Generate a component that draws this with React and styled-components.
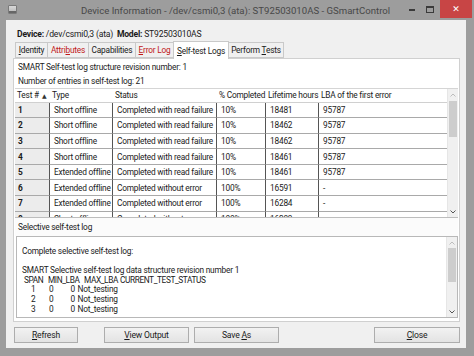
import React from 'react';
import styled, { createGlobalStyle } from 'styled-components';

const GlobalStyle = createGlobalStyle`
  html, body {
    margin: 0;
    padding: 0;
    background: #9d9d9d;
  }
  * { box-sizing: border-box; }
`;

const UI_FONT = `"Roboto", "Liberation Sans", sans-serif`;
const FS = '8.3px';
const LS = '-0.2px';

const Window = styled.div`
  width: 474px;
  height: 356px;
  background: #9d9d9d;
  display: flex;
  flex-direction: column;
  font-family: ${UI_FONT};
  letter-spacing: ${LS};
  color: #1a1a1a;
  overflow: hidden;
`;

const TitleBar = styled.div`
  height: 20px;
  flex: none;
  display: flex;
  align-items: center;
`;

const TitleIcon = styled.div`
  width: 9px;
  height: 9px;
  margin: 0 0 2px 8px;
  background: linear-gradient(#d8d8d8, #b8b8b8);
  border: 1px solid #7a7a7a;
  border-radius: 1px;
  &::after {
    content: '';
    display: block;
    margin-top: 5px;
    height: 2px;
    background: #666;
  }
`;

const TitleText = styled.div`
  flex: 1;
  text-align: center;
  font-size: 9.6px;
  letter-spacing: 0;
  color: #484848;
  padding-left: 50px;
  white-space: nowrap;
`;

const Controls = styled.div`
  display: flex;
  align-items: flex-start;
  height: 20px;
  margin-right: 2px;
`;

const CtlButton = styled.div`
  width: ${p => p.$w}px;
  height: 18px;
  display: flex;
  align-items: center;
  justify-content: center;
  background: ${p => (p.$close ? '#c84545' : 'transparent')};
  color: ${p => (p.$close ? '#fff' : '#333')};
  font-family: "DejaVu Sans", sans-serif;
  font-size: 9px;
  font-weight: bold;
`;

const MinGlyph = styled.div`
  width: 6px;
  height: 2px;
  background: #3a3a3a;
  margin-top: 2px;
`;

const MaxGlyph = styled.div`
  width: 8px;
  height: 7px;
  border: 1px solid #3a3a3a;
  border-top-width: 2px;
`;

const Client = styled.div`
  flex: 1;
  min-height: 0;
  margin: 0 8px 8px 6px;
  background: #f0f0f0;
  display: flex;
  flex-direction: column;
  padding: 7px 6px 5px 7px;
`;

const InfoLine = styled.div`
  flex: none;
  font-size: 8.6px;
  height: 14px;
  line-height: 14px;
  padding-left: 4px;
  white-space: nowrap;
  b { font-weight: 700; }
`;

const TabRow = styled.div`
  flex: none;
  display: flex;
  align-items: flex-end;
  height: 17px;
  padding-left: 2px;
`;

const Tab = styled.div`
  width: ${p => p.$w}px;
  height: ${p => (p.$active ? 18 : 16)}px;
  margin-bottom: ${p => (p.$active ? -1 : 0)}px;
  margin-left: ${p => (p.$first ? 0 : -1)}px;
  display: flex;
  align-items: center;
  justify-content: center;
  font-size: ${FS};
  white-space: nowrap;
  background: ${p => (p.$active ? '#ffffff' : '#f0f0f0')};
  border: 1px solid #c9c9c9;
  border-bottom: ${p => (p.$active ? 'none' : '1px solid #c9c9c9')};
  color: ${p => (p.$warn ? '#c01818' : '#1a1a1a')};
  position: relative;
  z-index: ${p => (p.$active ? 2 : 1)};
  u { text-decoration: underline; }
`;

const Panel = styled.div`
  flex: 1;
  min-height: 0;
  background: #ffffff;
  border: 1px solid #d0d0d0;
  display: flex;
  flex-direction: column;
  padding: 0 1px 3px 1px;
`;

const PanelText = styled.div`
  flex: none;
  font-size: ${FS};
  height: 14px;
  line-height: 14px;
  padding-left: 3px;
  white-space: nowrap;
  &:first-child { margin-top: 1px; }
`;

const TableWrap = styled.div`
  flex: none;
  height: 130px;
  border-top: 1px solid #d5d5d5;
  border-bottom: 1px solid #bdbdbd;
  display: flex;
  overflow: hidden;
`;

const Table = styled.div`
  flex: 1;
  display: grid;
  grid-template-columns: 35px 63px 104px 49px 53px 1fr;
  grid-template-rows: 13.5px;
  grid-auto-rows: 15.6px;
  font-size: ${FS};
  align-content: start;
`;

const HeadCell = styled.div`
  display: flex;
  align-items: center;
  padding-left: 2px;
  white-space: nowrap;
  overflow: hidden;
  background: #fff;
  border-bottom: 1px solid #d0d0d0;
`;

const SortArrow = styled.span`
  font-family: "DejaVu Sans", sans-serif;
  font-size: 6px;
  margin-left: 3px;
  color: #333;
`;

const Cell = styled.div`
  display: flex;
  align-items: center;
  padding-left: ${p => (p.$num ? 3 : 4)}px;
  white-space: nowrap;
  overflow: hidden;
  background: ${p => (p.$num ? '#ececec' : '#ffffff')};
  font-weight: ${p => (p.$num ? 700 : 400)};
  border-bottom: 1px solid #a9a9a9;
  border-right: ${p => (p.$last ? 'none' : '1px solid #555')};
`;

const ScrollBar = styled.div`
  flex: none;
  width: 11px;
  display: flex;
  flex-direction: column;
  background: #f0f0f0;
  border-left: 1px solid #e6e6e6;
`;

const ScrollArrow = styled.div`
  height: 11px;
  display: flex;
  align-items: center;
  justify-content: center;
  color: ${p => (p.$dim ? '#bdbdbd' : '#555')};
`;

const ScrollTrack = styled.div`
  flex: 1;
  padding: 0 1px;
`;

const Thumb = styled.div`
  margin-top: ${p => p.$top}px;
  height: ${p => p.$h}px;
  background: #cdcdcd;
`;

const Chevron = ({ up }) => (
  <svg width="6" height="4" viewBox="0 0 6 4">
    <path d={up ? 'M0.5 3.5 L3 1 L5.5 3.5' : 'M0.5 0.5 L3 3 L5.5 0.5'} fill="none" stroke="currentColor" strokeWidth="1" />
  </svg>
);

const SectionLabel = styled.div`
  flex: none;
  font-size: ${FS};
  height: 18px;
  line-height: 18px;
  padding-left: 3px;
  background: #fbfbfb;
`;

const TextBox = styled.div`
  flex: 1;
  min-height: 0;
  margin-left: 1px;
  border: 1px solid #b8b8b8;
  display: flex;
  overflow: hidden;
`;

const LogText = styled.div`
  flex: 1;
  padding-left: 5px;
  font-size: ${FS};
  overflow: hidden;
  color: #1a1a1a;
`;

const LogLine = styled.div`
  height: 9.7px;
  line-height: 9.7px;
  white-space: pre;
`;

const LogCols = styled(LogLine)`
  display: grid;
  grid-template-columns: ${p => p.$cols};
  padding-left: ${p => p.$pad}px;
  letter-spacing: ${p => (p.$tight ? '-0.4px' : 'inherit')};
`;

const ButtonRow = styled.div`
  flex: none;
  display: flex;
  align-items: center;
  height: 16px;
  margin-top: 5px;
  padding-left: 1px;
`;

const Button = styled.div`
  width: ${p => p.$w}px;
  margin-left: ${p => p.$ml || 0}px;
  height: 16px;
  border: 1px solid #adadad;
  background: linear-gradient(#f2f2f2, #e3e3e3);
  display: flex;
  align-items: center;
  justify-content: center;
  font-size: 8.6px;
  color: #1a1a1a;
  u { text-decoration: underline; }
`;

const rows = [
  ['1', 'Short offline', 'Completed with read failure', '10%', '18481', '95787'],
  ['2', 'Short offline', 'Completed with read failure', '10%', '18462', '95787'],
  ['3', 'Short offline', 'Completed with read failure', '10%', '18462', '95787'],
  ['4', 'Short offline', 'Completed with read failure', '10%', '18461', '95787'],
  ['5', 'Extended offline', 'Completed with read failure', '10%', '18461', '95787'],
  ['6', 'Extended offline', 'Completed without error', '100%', '16591', '-'],
  ['7', 'Extended offline', 'Completed without error', '100%', '16284', '-'],
  ['8', 'Short offline', 'Completed without error', '100%', '16283', '-'],
];

const headers = ['Test #', 'Type', 'Status', '% Completed', 'Lifetime hours', 'LBA of the first error'];

const spans = [
  ['1', '0', '0', 'Not_testing'],
  ['2', '0', '0', 'Not_testing'],
  ['3', '0', '0', 'Not_testing'],
];

export default function App() {
  return (
    <>
      <GlobalStyle />
      <Window>
        <TitleBar>
          <TitleIcon />
          <TitleText>Device Information - /dev/csmi0,3 (ata): ST92503010AS - GSmartControl</TitleText>
          <Controls>
            <CtlButton $w={16}><MinGlyph /></CtlButton>
            <CtlButton $w={20}><MaxGlyph /></CtlButton>
            <CtlButton $w={32} $close>✕</CtlButton>
          </Controls>
        </TitleBar>

        <Client>
          <InfoLine>
            <b>Device:</b> /dev/csmi0,3 (ata)&nbsp;&nbsp;<b>Model:</b> ST92503010AS
          </InfoLine>

          <TabRow>
            <Tab $first $w={33}><span><u>I</u>dentity</span></Tab>
            <Tab $w={42} $warn><span>Attri<u>b</u>utes</span></Tab>
            <Tab $w={48}><span>Capabilities</span></Tab>
            <Tab $w={39} $warn><span><u>E</u>rror Log</span></Tab>
            <Tab $w={56} $active><span><u>S</u>elf-test Logs</span></Tab>
            <Tab $w={56}><span>Perform <u>T</u>ests</span></Tab>
          </TabRow>

          <Panel>
            <PanelText>SMART Self-test log structure revision number: 1</PanelText>
            <PanelText>Number of entries in self-test log: 21</PanelText>

            <TableWrap>
              <Table>
                {headers.map((h, i) => (
                  <HeadCell key={h}>
                    {h}
                    {i === 0 && <SortArrow>▲</SortArrow>}
                  </HeadCell>
                ))}
                {rows.map(r =>
                  r.map((c, i) => (
                    <Cell key={r[0] + '-' + i} $num={i === 0} $last={i === r.length - 1}>
                      {c}
                    </Cell>
                  ))
                )}
              </Table>
              <ScrollBar>
                <ScrollArrow $dim><Chevron up /></ScrollArrow>
                <ScrollTrack><Thumb $top={1} $h={36} /></ScrollTrack>
                <ScrollArrow><Chevron /></ScrollArrow>
              </ScrollBar>
            </TableWrap>

            <SectionLabel>Selective self-test log</SectionLabel>

            <TextBox>
              <LogText>
                <LogLine> </LogLine>
                <LogLine>Complete selective self-test log:</LogLine>
                <LogLine> </LogLine>
                <LogLine>SMART Selective self-test log data structure revision number 1</LogLine>
                <LogCols $tight $pad={2} $cols="24px 36px 36px auto">
                  <span>SPAN</span><span>MIN_LBA</span><span>MAX_LBA</span><span>CURRENT_TEST_STATUS</span>
                </LogCols>
                {spans.map(s => (
                  <LogCols key={s[0]} $pad={9} $cols="18px 21.5px 7px auto">
                    {s.map((v, i) => <span key={i}>{v}</span>)}
                  </LogCols>
                ))}
              </LogText>
              <ScrollBar>
                <ScrollArrow $dim><Chevron up /></ScrollArrow>
                <ScrollTrack><Thumb $top={0} $h={34} /></ScrollTrack>
                <ScrollArrow><Chevron /></ScrollArrow>
              </ScrollBar>
            </TextBox>
          </Panel>

          <ButtonRow>
            <Button $w={64}><span><u>R</u>efresh</span></Button>
            <Button $w={85} $ml={26}><span><u>V</u>iew Output</span></Button>
            <Button $w={85} $ml={5}><span>Save <u>A</u>s</span></Button>
            <Button $w={86} $ml={95}><span><u>C</u>lose</span></Button>
          </ButtonRow>
        </Client>
      </Window>
    </>
  );
}
